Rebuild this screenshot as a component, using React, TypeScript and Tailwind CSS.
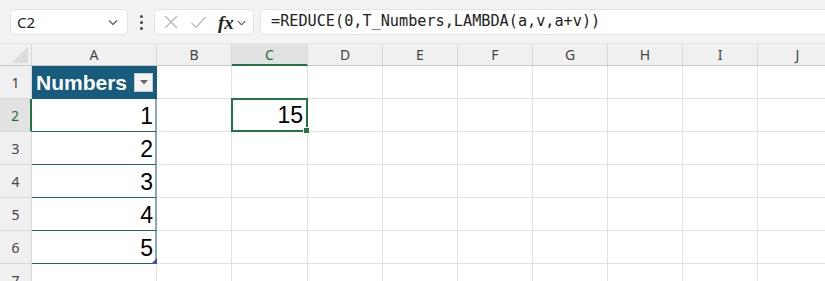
import React from 'react';

const COLS = [
  { id: 'A', w: 125 },
  { id: 'B', w: 75 },
  { id: 'C', w: 76 },
  { id: 'D', w: 75 },
  { id: 'E', w: 75 },
  { id: 'F', w: 75 },
  { id: 'G', w: 75 },
  { id: 'H', w: 75 },
  { id: 'I', w: 75 },
  { id: 'J', w: 80 },
];

const NUMS = [1, 2, 3, 4, 5];

const Chevron: React.FC<{ size?: number }> = ({ size = 12 }) => (
  <svg width={size} height={size} viewBox="0 0 12 12" fill="none" stroke="#555" strokeWidth="1.2">
    <path d="M2 4.5 L6 8.5 L10 4.5" />
  </svg>
);

const Toolbar: React.FC = () => (
  <div className="h-[44px] bg-[#f3f3f3] flex items-center gap-[6px] pl-[10px] pt-[1px] border-b border-[#e4e4e4] font-['Noto_Sans',sans-serif]">
    <div className="w-[118px] h-[26px] bg-white rounded-[5px] border border-[#e3e3e3] flex items-center justify-between pl-[6px] pr-[8px]">
      <span className="text-[15px] text-[#222] leading-none">C2</span>
      <Chevron />
    </div>
    <div className="w-[13px] flex flex-col items-center gap-[3px] ml-[1px]">
      <span className="w-[3px] h-[3px] rounded-full bg-[#444]" />
      <span className="w-[3px] h-[3px] rounded-full bg-[#444]" />
      <span className="w-[3px] h-[3px] rounded-full bg-[#444]" />
    </div>
    <div className="w-[100px] h-[26px] bg-white rounded-[5px] border border-[#e3e3e3] flex items-center pl-[8px] pr-[4px]">
      <svg width="16" height="16" viewBox="0 0 16 16" fill="none" stroke="#b5b5b5" strokeWidth="1.2">
        <path d="M2 2 L14 14 M14 2 L2 14" />
      </svg>
      <svg className="ml-[11px]" width="17" height="16" viewBox="0 0 17 16" fill="none" stroke="#b5b5b5" strokeWidth="1.2">
        <path d="M1.5 9 L6 13.5 L15.5 3" />
      </svg>
      <span className="ml-[11px] font-['Liberation_Serif',serif] italic font-bold text-[19px] text-[#222] leading-none">fx</span>
      <span className="ml-[2px]"><Chevron size={11} /></span>
    </div>
    <div className="flex-1 h-[26px] bg-white rounded-l-[5px] border border-r-0 border-[#e3e3e3] flex items-center pl-[10px]">
      <span className="font-['DejaVu_Sans_Mono',monospace] text-[15.2px] text-[#222] leading-none">=REDUCE(0,T_Numbers,LAMBDA(a,v,a+v))</span>
    </div>
  </div>
);

const HeaderRow: React.FC = () => (
  <div className="flex h-[22px] bg-[#f0f0f0] border-b border-[#c8c8c8] font-['Noto_Sans',sans-serif] text-[14px] text-[#444]">
    <div className="w-[32px] shrink-0 border-r border-[#d8d8d8] relative">
      <svg className="absolute right-[3px] bottom-[2px]" width="17" height="16" viewBox="0 0 17 16">
        <path d="M17 0 L17 16 L0 16 Z" fill="#dcdcdc" />
      </svg>
    </div>
    {COLS.map(c => (
      <div
        key={c.id}
        style={{ width: c.w }}
        className={
          c.id === 'C'
            ? 'shrink-0 flex items-center justify-center bg-[#e2e2e2] text-[#1e6b41] border-r border-[#d8d8d8] border-b-2 border-b-[#217346] -mb-px'
            : 'shrink-0 flex items-center justify-center border-r border-[#d8d8d8]'
        }
      >
        {c.id}
      </div>
    ))}
  </div>
);

const RowHead: React.FC<{ n: number; active?: boolean }> = ({ n, active }) => (
  <div
    className={
      active
        ? 'w-[32px] shrink-0 flex items-center justify-center bg-[#e2e2e2] text-[#1e6b41] border-r-2 border-[#217346] border-b border-b-[#d8d8d8] font-[\'Noto_Sans\',sans-serif] text-[14px]'
        : 'w-[32px] shrink-0 flex items-center justify-center bg-[#f0f0f0] text-[#444] border-r border-[#d8d8d8] border-b border-b-[#d8d8d8] font-[\'Noto_Sans\',sans-serif] text-[14px]'
    }
  >
    {n}
  </div>
);

const Grid: React.FC = () => {
  const rows = [1, 2, 3, 4, 5, 6, 7];
  return (
    <div>
      {rows.map(r => (
        <div key={r} className="flex h-[33px]">
          <RowHead n={r} active={r === 2} />
          {COLS.map(c => {
            if (c.id === 'A' && r === 1) {
              return (
                <div
                  key={c.id}
                  style={{ width: c.w }}
                  className="shrink-0 bg-[#175b7d] flex items-center justify-between pl-[4px] pr-[2px] border-r-2 border-[#175b7d]"
                >
                  <span className="font-['Liberation_Sans',sans-serif] font-bold text-[21px] text-white leading-none">Numbers</span>
                  <span className="w-[19px] h-[19px] bg-[#f4f4f4] border border-[#c9c9c9] flex items-center justify-center">
                    <svg width="8" height="5" viewBox="0 0 8 5">
                      <path d="M0 0 L8 0 L4 4.5 Z" fill="#666" />
                    </svg>
                  </span>
                </div>
              );
            }
            if (c.id === 'A' && r >= 2 && r <= 6) {
              return (
                <div
                  key={c.id}
                  style={{ width: c.w }}
                  className="shrink-0 relative flex items-end justify-end pr-[2px] pb-[1px] border-b border-[#1f5f80] border-r-2 border-r-[#88a9bd]"
                >
                  <span className="font-['Liberation_Sans',sans-serif] text-[23px] text-black leading-[28px]">{NUMS[r - 2]}</span>
                  {r === 6 && (
                    <svg className="absolute right-[-2px] bottom-[-1px]" width="6" height="6" viewBox="0 0 6 6">
                      <path d="M6 0 L6 6 L0 6 Z" fill="#3a50b0" />
                    </svg>
                  )}
                </div>
              );
            }
            if (c.id === 'C' && r === 2) {
              return (
                <div
                  key={c.id}
                  style={{ width: c.w }}
                  className="shrink-0 relative border-r border-b border-[#e1e1e1]"
                >
                  <div className="absolute -left-[1px] -top-[1px] right-[-1px] bottom-[-1px] border-2 border-[#217346] flex items-end justify-end pr-[3px] pb-[1px]">
                    <span className="font-['Liberation_Sans',sans-serif] text-[23px] text-black leading-[28px]">15</span>
                  </div>
                  <span className="absolute right-[-3px] bottom-[-3px] w-[5px] h-[5px] bg-[#217346] border border-white box-content" />
                </div>
              );
            }
            return (
              <div
                key={c.id}
                style={{ width: c.w }}
                className="shrink-0 border-r border-b border-[#e1e1e1]"
              />
            );
          })}
        </div>
      ))}
    </div>
  );
};

const App: React.FC = () => {
  return (
    <div className="w-[825px] h-[281px] overflow-hidden bg-white">
      <Toolbar />
      <HeaderRow />
      <Grid />
    </div>
  );
};

export default App;
